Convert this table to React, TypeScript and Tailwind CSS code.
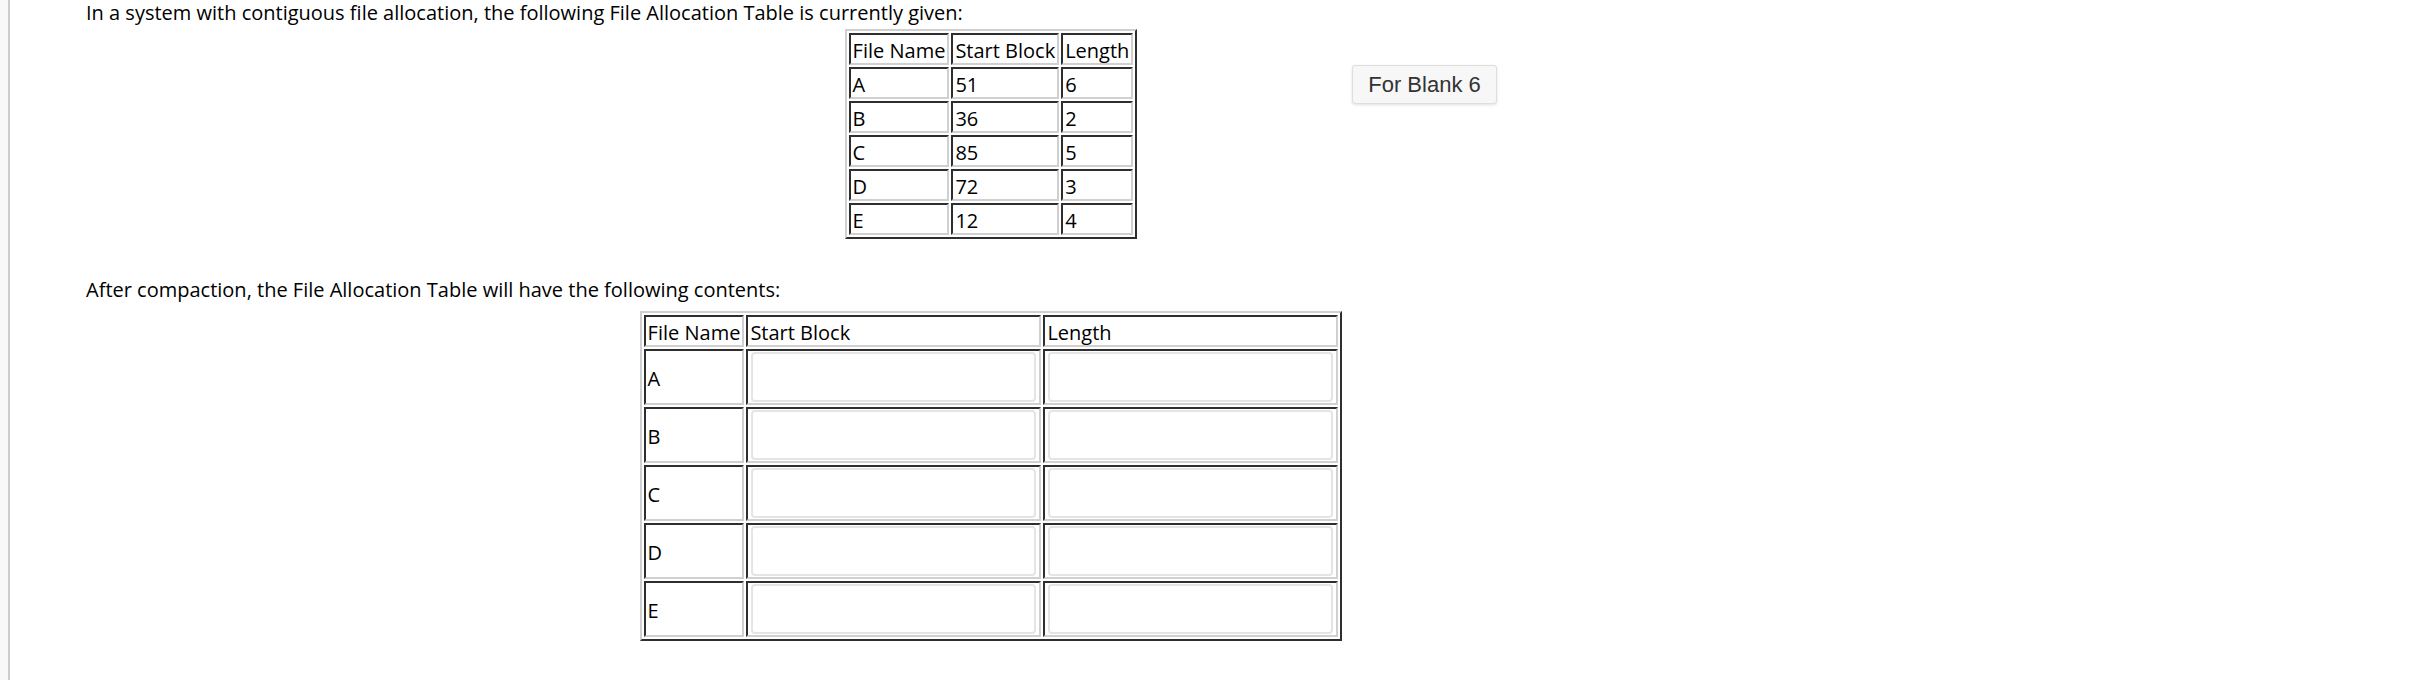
import React from "react";

const given = [
  ["A", "51", "6"],
  ["B", "36", "2"],
  ["C", "85", "5"],
  ["D", "72", "3"],
  ["E", "12", "4"],
];

const tableCls =
  "border-separate border-spacing-[2px] border-2 border-t-[#d0d0d0] border-l-[#d0d0d0] border-r-[#2e2e2e] border-b-[#2e2e2e]";
const borderCls = "border-2 border-t-[#2e2e2e] border-l-[#2e2e2e] border-r-[#d0d0d0] border-b-[#d0d0d0] text-left font-normal align-middle";
const cellCls = `${borderCls} px-[2px] pt-[3px] pb-0 leading-[25px]`;
const inputCellCls = `${borderCls} px-[3px] py-px`;

function BlankInput() {
  return <input type="text" className="block h-[50px] w-[285px] rounded-[4px] border-2 border-[#e4e4e4] bg-white outline-none" />;
}

export default function App() {
  return (
    <div className="flex min-h-[680px] w-[2432px] bg-white text-[20px] leading-[26px] text-black" style={{ fontFamily: '"Open Sans", sans-serif' }}>
      <div className="w-[10px] shrink-0 border-r-2 border-[#cccccc] bg-[#f8f8f8]" />

      <div className="relative w-[1886px] pl-[76px]">
        <p>In a system with contiguous file allocation, the following File Allocation Table is currently given:</p>

        <table className={`mx-auto mt-[3px] ${tableCls}`}>
          <tbody>
            <tr>
              <td className={cellCls}>File Name</td>
              <td className={cellCls}>Start Block</td>
              <td className={cellCls}>Length</td>
            </tr>
            {given.map(([name, start, len]) => (
              <tr key={name}>
                <td className={cellCls}>{name}</td>
                <td className={cellCls}>{start}</td>
                <td className={cellCls}>{len}</td>
              </tr>
            ))}
          </tbody>
        </table>

        <p className="mt-[38px]">After compaction, the File Allocation Table will have the following contents:</p>

        <table className={`mx-auto mt-[8px] ${tableCls}`}>
          <tbody>
            <tr>
              <td className={cellCls}>File Name</td>
              <td className={cellCls}>Start Block</td>
              <td className={cellCls}>Length</td>
            </tr>
            {given.map(([name]) => (
              <tr key={name}>
                <td className={`${borderCls} px-[2px] pt-[3px] pb-0`}>{name}</td>
                <td className={inputCellCls}>
                  <BlankInput />
                </td>
                <td className={inputCellCls}>
                  <BlankInput />
                </td>
              </tr>
            ))}
          </tbody>
        </table>

        {/* floating blank label */}
        <div
          className="absolute left-[1342px] top-[65px] flex h-[39px] w-[145px] items-center justify-center rounded-[3px] border border-[#dedede] bg-[#f7f7f7] text-[22px] text-[#333] shadow-[0_1px_3px_rgba(0,0,0,0.12)]"
          style={{ fontFamily: '"Liberation Sans", Arial, sans-serif' }}
        >
          For Blank 6
        </div>
      </div>
    </div>
  );
}
